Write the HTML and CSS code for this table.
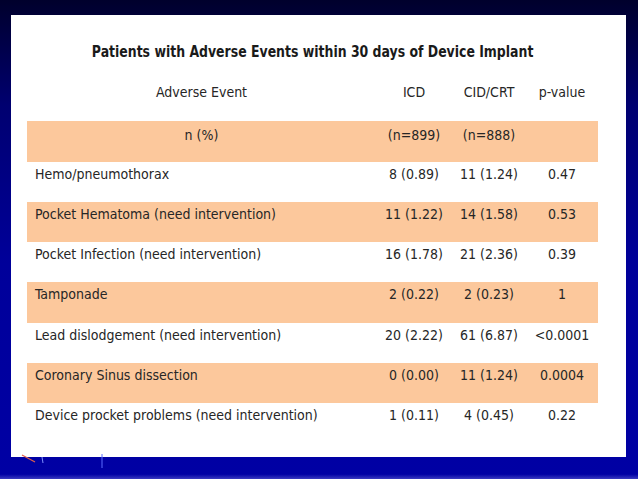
FILE: index.html
```html
<!DOCTYPE html>
<html lang="en">
<head>
<meta charset="utf-8">
<title>Patients with Adverse Events within 30 days of Device Implant</title>
<link rel="stylesheet" href="styles.css">
</head>
<body>
<div class="slide">
  <div class="panel">
    <h1 class="title"><span class="title-text">Patients with Adverse Events within 30 days of Device Implant</span></h1>
    <table class="events">
      <colgroup>
        <col class="c-event"><col class="c-icd"><col class="c-crt"><col class="c-p">
      </colgroup>
      <thead>
        <tr class="head">
          <th class="center">Adverse Event</th>
          <th>ICD</th>
          <th>CID/CRT</th>
          <th>p-value</th>
        </tr>
      </thead>
      <tbody>
        <tr class="alt first">
          <td class="center">n (%)</td>
          <td>(n=899)</td>
          <td>(n=888)</td>
          <td></td>
        </tr>
        <tr>
          <td class="name">Hemo/pneumothorax</td>
          <td>8 (0.89)</td>
          <td>11 (1.24)</td>
          <td>0.47</td>
        </tr>
        <tr class="alt">
          <td class="name">Pocket Hematoma (need intervention)</td>
          <td>11 (1.22)</td>
          <td>14 (1.58)</td>
          <td>0.53</td>
        </tr>
        <tr>
          <td class="name">Pocket Infection (need intervention)</td>
          <td>16 (1.78)</td>
          <td>21 (2.36)</td>
          <td>0.39</td>
        </tr>
        <tr class="alt">
          <td class="name">Tamponade</td>
          <td>2 (0.22)</td>
          <td>2 (0.23)</td>
          <td>1</td>
        </tr>
        <tr>
          <td class="name">Lead dislodgement (need intervention)</td>
          <td>20 (2.22)</td>
          <td>61 (6.87)</td>
          <td>&lt;0.0001</td>
        </tr>
        <tr class="alt">
          <td class="name">Coronary Sinus dissection</td>
          <td>0 (0.00)</td>
          <td>11 (1.24)</td>
          <td>0.0004</td>
        </tr>
        <tr>
          <td class="name">Device procket problems (need intervention)</td>
          <td>1 (0.11)</td>
          <td>4 (0.45)</td>
          <td>0.22</td>
        </tr>
      </tbody>
    </table>
  </div>
  <svg class="deco" width="110" height="22" viewBox="0 0 110 22" aria-hidden="true">
    <line x1="22" y1="3" x2="35" y2="10" stroke="#e0604a" stroke-width="1.2"/>
    <line x1="42" y1="5" x2="43" y2="11" stroke="#7f8fff" stroke-width="1"/>
    <line x1="102" y1="2" x2="102" y2="16" stroke="#5a6cff" stroke-width="1"/>
  </svg>
</div>
</body>
</html>
```

FILE: styles.css
```css
html, body {
  margin: 0;
  padding: 0;
}

body {
  width: 638px;
  height: 479px;
  overflow: hidden;
  background: linear-gradient(180deg, #00002c 0%, #000070 22%, #00009a 55%, #0000a4 99%, #3a3ac0 100%);
  font-family: "DejaVu Sans Condensed", "DejaVu Sans", "Liberation Sans", sans-serif;
  font-stretch: condensed;
  color: #262626;
}

.slide {
  position: relative;
  width: 638px;
  height: 479px;
  padding: 15px 0 0 11px;
  box-sizing: border-box;
}

.panel {
  width: 615px;
  height: 442px;
  background: #fff;
  box-sizing: border-box;
  padding: 27px 0 0 16px;
}

.title {
  margin: 0 0 19px 0;
  width: 571px;
  font-size: 16px;
  line-height: 20px;
  font-weight: bold;
  text-align: center;
  color: #1a1a1a;
  white-space: nowrap;
}

.title-text {
  display: inline-block;
  transform: scaleX(0.867);
  transform-origin: center;
}

.events {
  border-collapse: collapse;
  table-layout: fixed;
  width: 571px;
  font-size: 14px;
  line-height: 16px;
}

.c-event { width: 349px; }
.c-icd { width: 76px; }
.c-crt { width: 74px; }
.c-p { width: 72px; }

.events th,
.events td {
  height: 40.25px;
  box-sizing: border-box;
  padding: 4px 0 0 0;
  vertical-align: top;
  text-align: center;
  font-weight: normal;
  white-space: nowrap;
}

.events .head th {
  padding-top: 3px;
}

.events .first td {
  padding-top: 6px;
}

.events td.name {
  text-align: left;
  padding-left: 8px;
}

.events tr.alt td {
  background: #fcc89c;
}

.deco {
  position: absolute;
  left: 0;
  top: 452px;
}
```
